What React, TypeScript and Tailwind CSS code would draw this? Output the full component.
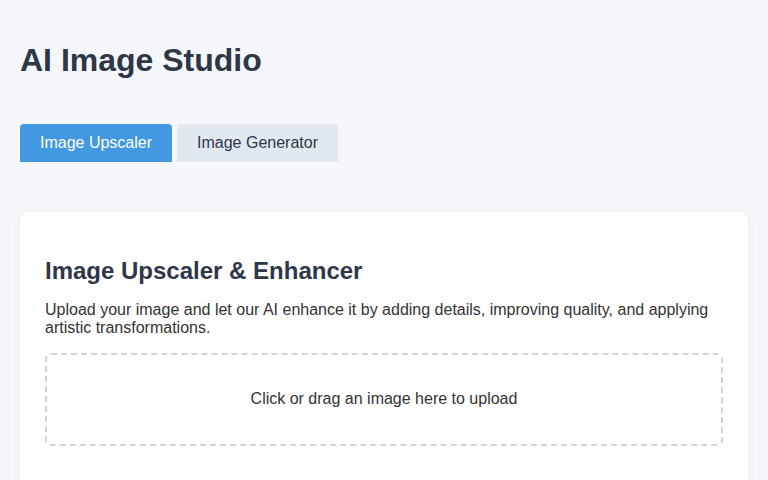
import React from 'react';

export default function App() {
  const tabs = ['Image Upscaler', 'Image Generator'];
  const active = 0;

  return (
    <div className="min-h-screen bg-[#f5f7fa] p-5 font-['Liberation_Sans',Arial,sans-serif] text-[#333]">
      <h1 className="mt-[22px] text-[32px] font-bold leading-[1.15] text-[#2d3748]">
        AI Image Studio
      </h1>

      {/* Tabs */}
      <div className="mt-[45px] flex gap-[5px]">
        {tabs.map((tab, i) => (
          <button
            key={tab}
            className={
              i === active
                ? 'rounded-t px-5 py-2.5 text-base leading-[1.15] bg-[#4299e1] text-white'
                : 'rounded-t px-5 py-2.5 text-base leading-[1.15] bg-[#e2e8f0] text-[#2d3748]'
            }
          >
            {tab}
          </button>
        ))}
      </div>

      {/* Card */}
      <div className="mt-[50px] rounded-lg bg-white px-[25px] pt-[25px] pb-[60px] shadow-[0_2px_10px_rgba(0,0,0,0.05)]">
        <h2 className="mt-5 text-2xl font-bold leading-[1.15] text-[#2d3748]">
          Image Upscaler &amp; Enhancer
        </h2>
        <p className="mt-4 text-base leading-[1.15] text-[#333]">
          Upload your image and let our AI enhance it by adding details, improving quality, and applying
          artistic transformations.
        </p>
        <div className="mt-[15px] flex h-[93px] items-center justify-center rounded-md border-2 border-dashed border-[#cbd5e0] pt-px text-base leading-[1.15] text-[#333]">
          Click or drag an image here to upload
        </div>
      </div>
    </div>
  );
}
